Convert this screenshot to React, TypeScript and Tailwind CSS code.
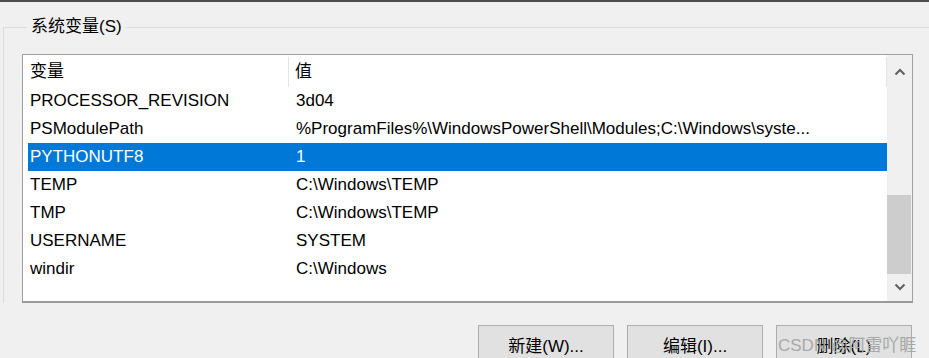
import React from 'react';

const rows = [
  { name: 'PROCESSOR_REVISION', value: '3d04' },
  { name: 'PSModulePath', value: '%ProgramFiles%\\WindowsPowerShell\\Modules;C:\\Windows\\syste...' },
  { name: 'PYTHONUTF8', value: '1', selected: true },
  { name: 'TEMP', value: 'C:\\Windows\\TEMP' },
  { name: 'TMP', value: 'C:\\Windows\\TEMP' },
  { name: 'USERNAME', value: 'SYSTEM' },
  { name: 'windir', value: 'C:\\Windows' },
];

const font = { fontFamily: '"Liberation Sans", "Noto Sans CJK SC", sans-serif' };

const Chevron = ({ up }: { up?: boolean }) => (
  <svg width="12" height="8" viewBox="0 0 12 8" className="text-[#606060]">
    <polyline
      points={up ? '1.5,6.5 6,2 10.5,6.5' : '1.5,1.5 6,6 10.5,1.5'}
      fill="none"
      stroke="currentColor"
      strokeWidth="2"
    />
  </svg>
);

const Button = ({ label }: { label: string }) => (
  <button className="w-[136px] h-[44px] bg-[#e1e1e1] border border-[#adadad] text-[17px] text-black leading-none pb-[1px]">
    {label}
  </button>
);

export default function App() {
  return (
    <div
      className="relative w-[929px] h-[358px] overflow-hidden bg-[#f0f0f0] border-t-2 border-[#4d4d4d] text-black"
      style={font}
    >
      <fieldset className="ml-[3px] mt-[15px] border-t border-l border-[#dcdcdc] pl-[18px] pr-[16px]">
        <legend className="ml-[5px] px-[4px] text-[17px] leading-[20px]">系统变量(S)</legend>

        <div className="mt-[17px] h-[249px] border border-[#a0a0a0] border-b-2 border-b-[#9a9a9a] bg-white flex">
          <div className="flex-1 pl-[5px] text-[17px]">
            <div className="flex h-[32px] items-center">
              <div className="w-[261px] h-[30px] mt-[1px] flex items-center pl-[2px] border-r border-[#e5e5e5]">变量</div>
              <div className="flex-1 h-[30px] mt-[1px] flex items-center pl-[6px] border-r border-[#e5e5e5]">值</div>
            </div>
            {rows.map((r) => (
              <div
                key={r.name}
                className={`flex h-[28px] items-center whitespace-nowrap ${r.selected ? 'bg-[#0078d7] text-white' : ''}`}
              >
                <div className="w-[266px] pl-[2px]">{r.name}</div>
                <div className="flex-1 pl-[2px] overflow-hidden">{r.value}</div>
              </div>
            ))}
          </div>

          <div className="w-[25px] bg-[#f0f0f0] flex flex-col items-center">
            <div className="h-[33px] flex items-center justify-center pt-[1px]">
              <Chevron up />
            </div>
            <div className="flex-1 w-full flex flex-col pt-[108px]">
              <div className="w-[24px] h-[79px] bg-[#cdcdcd]" />
            </div>
            <div className="h-[27px] flex items-center justify-center pb-[2px]">
              <Chevron />
            </div>
          </div>
        </div>
      </fieldset>

      <div className="flex justify-end gap-[13px] pr-[17px] mt-[22px]">
        <Button label="新建(W)..." />
        <Button label="编辑(I)..." />
        <Button label="删除(L)" />
      </div>

      <div className="absolute left-[778px] top-[333px] whitespace-nowrap text-[17px] leading-[22px] text-[#a8a8a8]">
        CSDN @阿雷吖睚
      </div>
    </div>
  );
}
